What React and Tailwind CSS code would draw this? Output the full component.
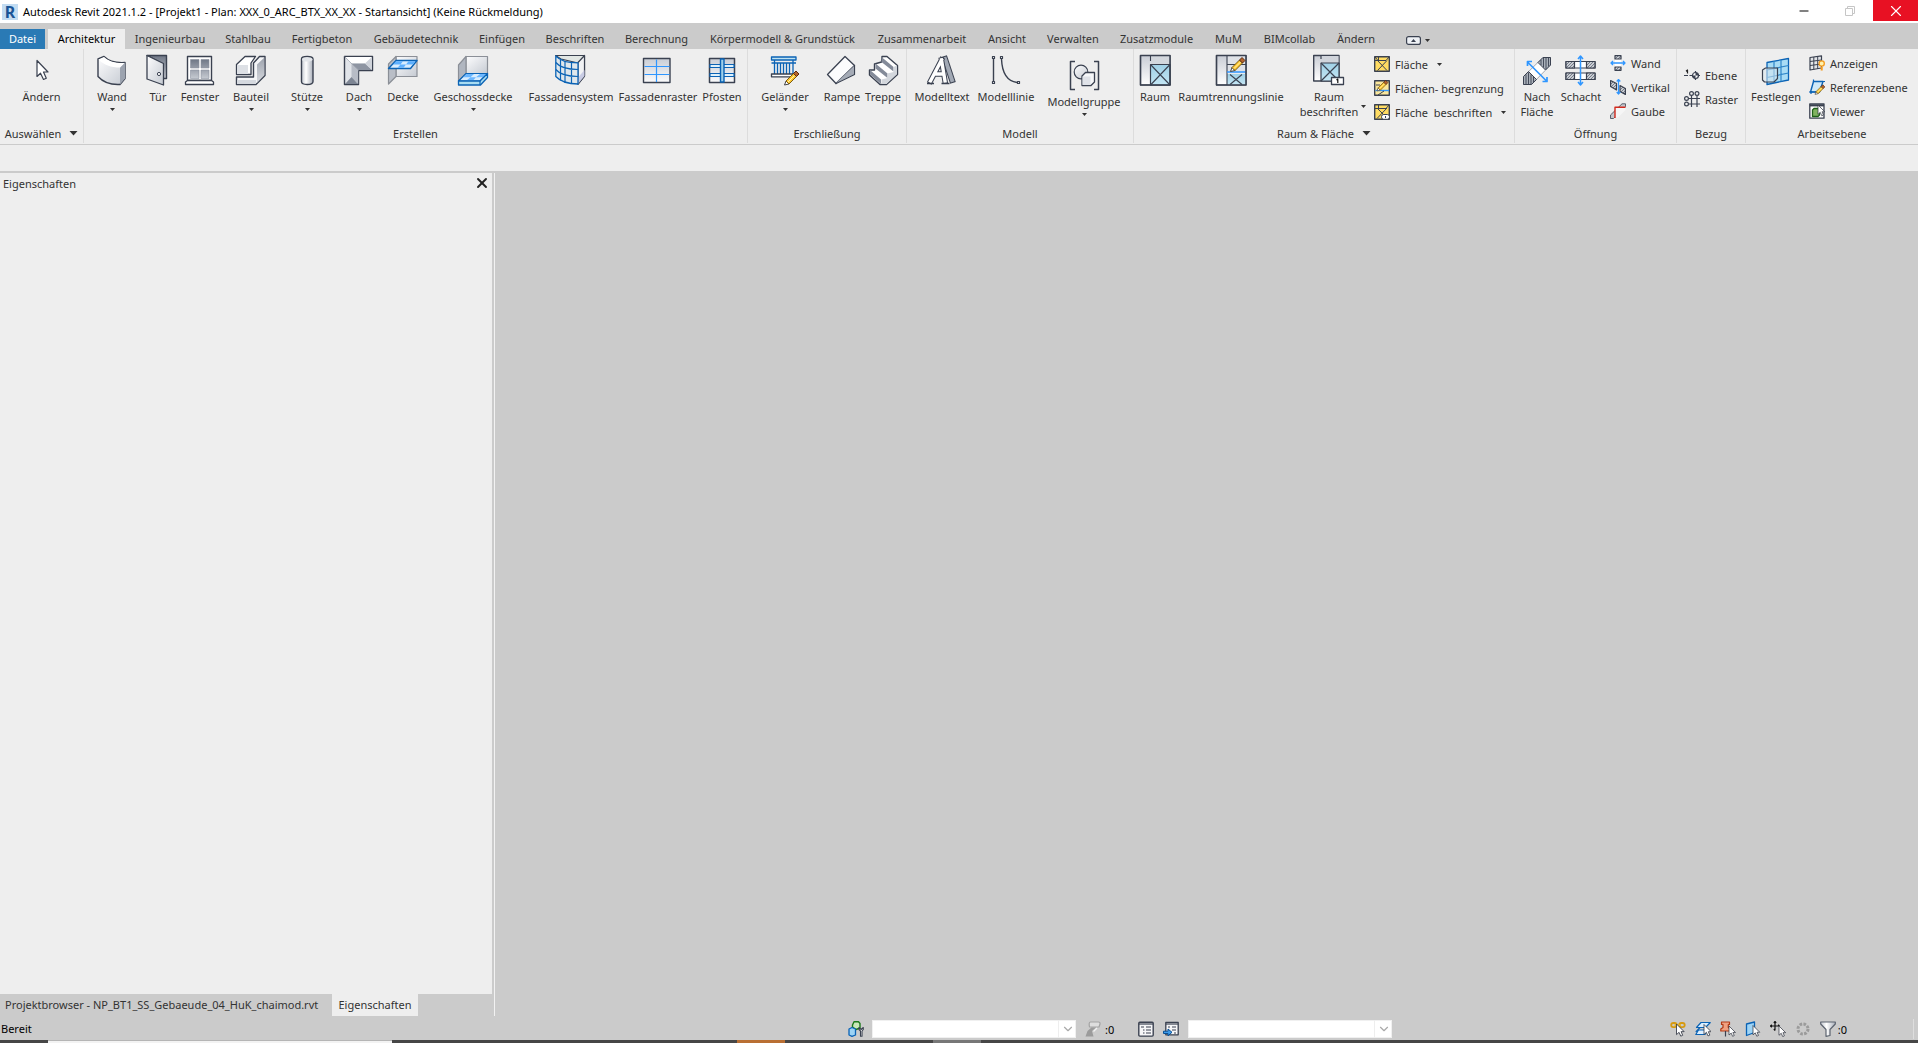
import { useState } from 'react';
import { ChevronDown, Minus, X } from 'lucide-react';
import clsx from 'clsx';

const INK = '#3a4150';
const BLUE = '#0b63b5';
const SKY = '#2f96ff';

/* ---------- icons ---------- */

// shared gradients, referenced by id from every icon
function Gradients() {
  return (
    <svg width="0" height="0" className="absolute" aria-hidden="true">
      <defs>
        <linearGradient id="light" x1="0" y1="0" x2="1" y2="1">
          <stop offset="0" stopColor="#fdfdfe" />
          <stop offset="1" stopColor="#c5cad2" />
        </linearGradient>
        <linearGradient id="down" x1="0" y1="0" x2="0" y2="1">
          <stop offset="0" stopColor="#c9cdd5" />
          <stop offset="1" stopColor="#fbfbfc" />
        </linearGradient>
        <linearGradient id="dark" x1="0" y1="0" x2="0" y2="1">
          <stop offset="0" stopColor="#6f7786" />
          <stop offset="1" stopColor="#c6cad1" />
        </linearGradient>
        <linearGradient id="tube" x1="0" y1="0" x2="1" y2="0">
          <stop offset="0" stopColor="#c3c8d0" />
          <stop offset="0.4" stopColor="#ffffff" />
          <stop offset="1" stopColor="#a9afba" />
        </linearGradient>
        <linearGradient id="wall" x1="0" y1="0" x2="0" y2="1">
          <stop offset="0" stopColor="#c9cdd5" />
          <stop offset="1" stopColor="#ffffff" />
        </linearGradient>
        <linearGradient id="water" x1="0" y1="0" x2="0" y2="1">
          <stop offset="0" stopColor="#9fd0e6" />
          <stop offset="1" stopColor="#c4e6f4" />
        </linearGradient>
        <pattern id="hatch" width="3" height="3" patternUnits="userSpaceOnUse">
          <rect width="3" height="3" fill="#c9cdd3" />
          <path d="M0 3L3 0" stroke="#6c7380" strokeWidth="0.9" />
        </pattern>
      </defs>
    </svg>
  );
}

function Icon({ size = 32, children }) {
  return (
    <svg width={size} height={size} viewBox={`0 0 ${size} ${size}`} fill="none" stroke={INK} strokeWidth="1.2" strokeLinejoin="round" className="shrink-0" aria-hidden="true">
      {children}
    </svg>
  );
}

const Pencil = ({ at = '', scale = 1 }) => (
  <g transform={`${at} scale(${scale})`} strokeWidth="1">
    <path d="M0 14.5L1.5 10.5L4.5 13.5z" fill="#fff" stroke="#444" />
    <path d="M1.5 10.5L9 3L12 6L4.5 13.5z" fill="#ffc931" stroke="#7a5a12" />
    <path d="M9 3L11.5 0.5L14.5 3.5L12 6z" fill="#b4632d" stroke="#5b2c10" />
    <path d="M3.5 11.5L10 5" stroke="#fff3b8" />
  </g>
);

const Cursor = ({ at = '' }) => (
  <path transform={at} d="M0 0V12.5L3 9.8L5 14.3L7.3 13.3L5.4 9H9z" fill="#fff" stroke="#333844" strokeWidth="1" />
);

const CursorIcon = () => (
  <Icon><path d="M11 6.5V22.5L14.5 19.2L17.5 25.5L20.3 24.2L17.5 18H22z" fill="#fff" stroke={INK} strokeWidth="1.2" /></Icon>
);

const WallIcon = () => (
  <Icon>
    <path d="M2 5L8 2.5C13 7.5 21 9 29 8.5V24.5L24 30.5C15 31 7 28 2 22.5z" fill="url(#light)" strokeWidth="1.4" />
    <path d="M24 30.5V13.5L29 8.5V24.5z" fill="#9ca3af" stroke="none" />
    <path d="M2.5 5.5L8 3C13 8 21 9.5 28.5 9L24 13.5C15 13.5 8 11 2.5 5.5z" fill="#fff" stroke="none" />
  </Icon>
);

const DoorIcon = () => (
  <Icon>
    <path d="M5 1.5H24.5V24.5H21V10L8 3z" fill="url(#dark)" strokeWidth="1.4" />
    <path d="M5 1.5L21.5 9.5V31L5 25z" fill="url(#light)" strokeWidth="1.3" />
    <circle cx="17" cy="20" r="1.6" fill="#fff" strokeWidth="1" />
  </Icon>
);

const WindowIcon = () => (
  <Icon>
    <rect x="3.5" y="2.5" width="24" height="24" fill="#fff" strokeWidth="1.4" />
    <path d="M6.5 5.5H15V14H6.5zM17 5.5H25V14H17zM6.5 16H15V24.5H6.5zM17 16H25V24.5H17z" fill="url(#dark)" stroke="#8b92a0" strokeWidth="0.6" />
    <path d="M3.5 26.5H27.5L29.5 28V30.5H1.5V28z" fill="#fff" strokeWidth="1.3" />
  </Icon>
);

const ComponentIcon = () => (
  <Icon>
    <path d="M1.5 10.5L10 2.5H20.5L16 9V20.5H1.5z" fill="#fff" strokeWidth="1.3" />
    <path d="M2 11H13V20H2z" fill="#dde0e5" stroke="none" />
    <path d="M18.5 9L24.5 2.5H30V21.5L21 30.5H1.5V23H18.5z" fill="#f4f5f7" strokeWidth="1.4" />
    <path d="M22 10.5L29.5 3.5V21L22 29z" fill="url(#dark)" stroke="none" opacity="0.65" />
    <path d="M2 26H21V30H2z" fill="#d5d9df" stroke="none" />
  </Icon>
);

const ColumnIcon = () => (
  <Icon>
    <path d="M10.5 5Q10.5 2.5 16.2 2.5T22 5V27.5Q22 30.5 16.2 30.5T10.5 27.5z" fill="url(#tube)" strokeWidth="1.4" />
    <path d="M11 5.5Q11 7.5 16.2 7.5T21.5 5.5Q21 3.2 16.2 3.2T11 5.5z" fill="#e3e6ea" stroke="none" />
  </Icon>
);

const RoofIcon = () => (
  <Icon>
    <path d="M1.5 2.5H29.5V16.5H15.5V30.5H1.5z" fill="#e1e4e9" strokeWidth="1.4" />
    <path d="M2 3H29L22 9.5H8.5z" fill="#fff" stroke="none" />
    <path d="M8.5 9.5H22L29 16H15.5z" fill="#8e95a2" stroke="none" />
    <path d="M8.5 9.5L15.2 16.5V30L8.5 23z" fill="#b7bcc6" stroke="none" />
    <path d="M29 3V16L22 9.5z" fill="#cfd3da" stroke="none" />
    <path d="M2 30L8.5 23L15 30z" fill="#7d8593" stroke="none" />
    <path d="M1.5 2.5L15.5 16.5" strokeWidth="0.6" stroke="#8b92a0" />
  </Icon>
);

const CeilingIcon = () => (
  <Icon>
    <path d="M9 2.5H30V22.5H9z" fill="url(#light)" stroke="#8b8f97" />
    <path d="M1.5 10L9 2.5V22.5L1.5 30z" fill="#b9bec7" stroke="#8b8f97" />
    <path d="M1.5 14.5L9 6.5H30L23.5 14.5z" fill="#d8edff" stroke={BLUE} strokeWidth="1.4" />
    <path d="M9 7.2H16L13.5 10.5H6zM21.5 7.2H28.5L26 10.5H19zM13.5 10.5H19L16.5 13.8H10.5z" fill="#5db0ff" stroke="none" />
  </Icon>
);

const FloorIcon = () => (
  <Icon>
    <path d="M9 2.5H30.5V20H9z" fill="url(#light)" stroke="#8b8f97" />
    <path d="M1.5 11L9 2.5V20L1.5 27z" fill="#b0b6c0" stroke="#8b8f97" />
    <path d="M1.5 27L9 19.5H30.5L23 27z" fill="#d8edff" stroke={BLUE} />
    <path d="M9.5 20H17L13.5 23.3H6zM23 20H29.5L26.5 23.3H19zM13.5 23.3H19L16 26.5H9.5z" fill="#6cb7ff" stroke="none" />
    <path d="M1.5 27H23L30.5 19.5V23.5L23.5 31H1.5z" fill="#a8dcf2" stroke={BLUE} strokeWidth="1.3" />
    <path d="M23 27V31" stroke={BLUE} />
  </Icon>
);

const CurtainSystemIcon = () => (
  <Icon>
    <path d="M0.5 1.5H29.5V22L23 30V9L6 5z" fill="#e2e7e4" />
    <path d="M29.5 1.5V22L23 30V8.5z" fill="#f1f2f4" />
    <path d="M23.5 23L29.5 16V22L23 30z" fill="#c9cce4" stroke="none" />
    <path d="M0.8 1.8C5 7 12 8.8 23 8.8V30C12 30 5 27 0.8 22.5z" fill="#dfe7ec" stroke={BLUE} strokeWidth="1.3" />
    <path d="M0.8 8.5C5 13.5 12 15.5 23 15.5M0.8 15.5C5 20.5 12 22.5 23 22.5M5.5 6V26.5M10 7.5V29M16.5 8.5V29.8" stroke={BLUE} strokeWidth="1.2" />
  </Icon>
);

const CurtainGridIcon = () => (
  <Icon>
    <rect x="1.5" y="4.5" width="26.5" height="24" fill="url(#down)" strokeWidth="1.4" />
    <path d="M14.5 5.5V28M2.5 12.5H27.5M2.5 20.5H27.5" stroke={SKY} strokeWidth="1.2" />
  </Icon>
);

const MullionIcon = () => (
  <Icon>
    <rect x="3.5" y="4.5" width="25" height="24" fill="url(#down)" strokeWidth="1.5" />
    <path d="M4 10.5H28V13.5H4zM4 19.5H28V22.5H4z" fill="#dff1fb" stroke={BLUE} strokeWidth="1.2" />
    <rect x="14.5" y="5" width="3.5" height="23" fill="#9fd0ea" stroke={BLUE} strokeWidth="1.4" />
  </Icon>
);

const RailingIcon = () => (
  <Icon>
    <rect x="2.5" y="3" width="24.5" height="3" fill="#bfe3f3" stroke={BLUE} strokeWidth="1.3" />
    <path d="M2.5 9H27M5.5 6V20M8.5 9V20M11.5 9V20M14.5 9V20M17.5 9V20M20.5 9V20M24 6V20" stroke={BLUE} strokeWidth="1.3" />
    <rect x="2.5" y="20" width="24" height="2.8" fill="#fff" strokeWidth="1.3" />
    <Pencil at="translate(15.5 16.5)" />
  </Icon>
);

const RampIcon = () => (
  <Icon>
    <path d="M28.5 11.5V20.5L10 29.5z" fill="url(#dark)" />
    <path d="M1.5 20.5L19 2.5L28.5 11.5L10 29.5z" fill="#fcfcfd" strokeWidth="1.3" />
    <path d="M10 29L28 12V20z" fill="#a5abb6" stroke="none" />
  </Icon>
);

const StairIcon = () => (
  <Icon>
    <path d="M15 2.5H20L30.5 11.5V20.5L19.5 30.5H13L2.5 21V16L7.5 16V10L14.5 8z" fill="#fff" strokeWidth="1.4" />
    <path d="M14.5 3L26.5 13V17.5L14.5 8zM8.5 9.5L20.5 19.5V24L8.5 14.5zM3 16L14 25.5V30L3 20.5z" fill="#848b99" stroke="none" />
    <path d="M26.5 13L30 11.5V20L19.5 30H14.5V25.5L20.5 24V19.5L26.5 18z" fill="#d3d7dd" stroke="none" />
  </Icon>
);

const ModelTextIcon = () => (
  <Icon>
    <g strokeLinecap="square">
      <path d="M19 5L26 26" stroke="#3a4150" strokeWidth="6" />
      <path d="M19 5L26 26" stroke="#a2a9b5" strokeWidth="4" />
      <path d="M15.5 6L4.5 27M15.5 6L19 27M9 20H17" stroke="#3a4150" strokeWidth="5.4" />
      <path d="M15.5 6L4.5 27M15.5 6L19 27M9 20H17" stroke="#fff" strokeWidth="3.4" />
    </g>
    <path d="M1 29.5H8M15.5 29.5H23.5" strokeWidth="1.4" />
  </Icon>
);

const ModelLineIcon = () => (
  <Icon>
    <path d="M3.5 5V27M11.5 5C12 17 16 27 27 28.5" strokeWidth="1.4" />
    <path d="M2.5 2.5H4.5V4.5H2.5zM2.5 27.5H4.5V29.5H2.5zM10.5 2.5H12.5V4.5H10.5zM27.5 27.5H29.5V29.5H27.5z" fill="#fff" />
  </Icon>
);

const ModelGroupIcon = () => (
  <Icon>
    <path d="M7 2.5H2.5V30.5H7M26 2.5H30.5V30.5H26" strokeWidth="1.5" />
    <circle cx="13" cy="13" r="6.8" fill="url(#light)" />
    <path d="M14 17L17.5 13.5H26.5V23L23 26.5H14z" fill="#f6f7f9" strokeWidth="1.3" />
    <path d="M14.5 17.5H22.5V26H14.5z" fill="#dfe2e8" stroke="none" />
  </Icon>
);

const RoomIcon = () => (
  <Icon>
    <rect x="1.5" y="1.5" width="29.5" height="29.5" fill="url(#wall)" />
    <rect x="12" y="2" width="19" height="8" fill="#d3d7dd" stroke="none" />
    <rect x="11.5" y="10.5" width="19.5" height="20.5" fill="url(#water)" />
    <path d="M11.5 10.5L31 31M31 10.5L11.5 31M11.5 2V7" strokeWidth="1.1" />
    <rect x="1.5" y="1.5" width="29.5" height="29.5" strokeWidth="1.5" />
  </Icon>
);

const RoomSeparatorIcon = () => (
  <Icon>
    <rect x="1.5" y="1.5" width="29.5" height="29.5" fill="url(#wall)" />
    <rect x="12" y="2" width="18.5" height="16" fill="#dfe2e7" stroke="none" />
    <rect x="12" y="20" width="18.5" height="10.5" fill="url(#water)" stroke="none" />
    <path d="M12 2V31M15 20.5L27 30.5M27 20.5L15 30.5M12 10.5H31" strokeWidth="1.1" />
    <path d="M12 18H31" stroke={SKY} strokeWidth="1.5" />
    <rect x="1.5" y="1.5" width="29.5" height="29.5" strokeWidth="1.5" />
    <Pencil at="translate(15.5 3)" />
  </Icon>
);

const RoomTagIcon = () => (
  <Icon>
    <rect x="0.7" y="1.5" width="25.3" height="25.5" fill="url(#wall)" strokeWidth="1.4" />
    <rect x="8" y="2" width="17.5" height="7" fill="#d0d4db" stroke="none" />
    <rect x="8" y="9" width="18" height="18" fill="url(#water)" />
    <path d="M8 9L26 27M26 9L8 27M8 2V5" />
    <rect x="18.5" y="23.5" width="12" height="7" fill="#fff" strokeWidth="1.3" />
    <path d="M23.5 26L24.8 25V29" stroke="#111" />
  </Icon>
);

const ByFaceIcon = () => (
  <Icon>
    <path d="M2.5 30.5V22.5L22 3.5H29.5V11L10.5 30.5z" fill="#fff" stroke="#8b92a0" strokeWidth="0.8" />
    <path d="M17 8.5L22 3.5H29.5V11L24.5 16zM2.5 22.5L7.5 17.5L15.5 25.5L10.5 30.5H2.5z" fill="#aab1ba" stroke={INK} strokeWidth="1" />
    <path d="M20 6V11M22.5 4V13.5M25 4V15M27.5 4V12.5M5 20.5V30M7.5 18.5V30M10 20.5V30M12.5 23V28" strokeWidth="0.9" />
    <path d="M7 8.5L25 26.5M6.5 12V7.5H11M21.5 27.5H26V23" stroke={SKY} strokeWidth="1.7" />
  </Icon>
);

const ShaftIcon = () => (
  <Icon>
    <path d="M1 7.5H30V14H1zM1 19H30V25.5H1z" fill="#fff" stroke={INK} />
    <path d="M1 7.5H9.5V14H1zM21.5 7.5H30V14H21.5zM1 19H9.5V25.5H1zM21.5 19H30V25.5H21.5z" fill="url(#hatch)" />
    <path d="M15.5 2V31M13 5L15.5 2L18 5M13 28L15.5 31L18 28" stroke={SKY} strokeWidth="1.5" />
  </Icon>
);

const SetPlaneIcon = () => (
  <Icon>
    <path d="M7 8.5L28.5 4.5V26L7 30.5z" fill="#a8dcf5" stroke={BLUE} strokeWidth="1.3" />
    <path d="M14 7V29M21 6V27.5M7 16L28.5 11.5M7 23.5L28.5 19" stroke="#2f86c9" />
    <path d="M2.5 16L5.5 14H17.5V24.5L14 28H4.5L2.5 26z" fill="#dbe7ef" fillOpacity="0.55" strokeWidth="1.2" />
  </Icon>
);

/* 16px icons */

const AreaIcon = () => (
  <Icon size={16}>
    <rect x="0.7" y="0.7" width="14.6" height="14.6" fill="#ffdc62" strokeWidth="1.4" />
    <path d="M1 4.5H12M4.5 1V4.5M3.5 4.5L13 14.5M13 4.5L3.5 14.5M1 1L4 4.5M15 1L12 4.5" strokeWidth="1" />
  </Icon>
);

const AreaBoundaryIcon = () => (
  <Icon size={16}>
    <rect x="0.7" y="0.7" width="14.6" height="14.6" fill="#fbe79b" strokeWidth="1.4" />
    <path d="M1.5 10.5H15" stroke={SKY} strokeWidth="1.4" />
    <path d="M4 15L10 11M2 5H6" strokeWidth="1" />
    <Pencil at="translate(3 0)" scale={0.75} />
  </Icon>
);

const AreaTagIcon = () => (
  <Icon size={16}>
    <rect x="0.7" y="0.7" width="14.6" height="14.6" fill="#ffdc62" strokeWidth="1.4" />
    <path d="M1 4.5H12M3.5 4.5L12 13M13 4L3 14.5M4.5 1V4.5M15 1L12 4.5" strokeWidth="1" />
    <rect x="7.5" y="10.5" width="8" height="4.8" rx="2.2" fill="#fff" strokeWidth="1" />
    <path d="M11.5 12V14" strokeWidth="1" />
  </Icon>
);

const WallOpeningIcon = () => (
  <Icon size={16}>
    <path d="M5 0.7H11V15.3H5z" fill="#fff" stroke="none" />
    <path d="M5 0.7H11V4H5zM5 12H11V15.3H5z" fill="url(#hatch)" />
    <path d="M1 8H15M3 6L1 8L3 10M13 6L15 8L13 10" stroke={SKY} strokeWidth="1.3" />
  </Icon>
);

const VerticalIcon = () => (
  <Icon size={16}>
    <path d="M0.6 1.5L6.5 4.5V11L0.6 7.5zM10 6.5L15.4 9.5V15.4L10 12.5z" fill="url(#hatch)" />
    <path d="M8.5 0.5V15M6.7 2.5L8.5 0.5L10.3 2.5M6.7 13L8.5 15L10.3 13" stroke={SKY} strokeWidth="1.2" />
  </Icon>
);

const DormerIcon = () => (
  <Icon size={16}>
    <path d="M0.5 15.5V12L12 0.8H15.5V3.5L3.5 15.5z" fill="#c3c7cd" stroke="#4d5460" strokeWidth="0.9" />
    <path d="M5 14.5V4.5H15.5V7L8 14.5z" fill="#f6f6f6" stroke="none" />
    <path d="M5 15V4.2H15.5" stroke="#d22a1e" strokeWidth="1.4" />
  </Icon>
);

const LevelIcon = () => (
  <Icon size={16}>
    <path d="M0 8.5H4M5.5 8.5H7.5M11.5 4V13M7 8.5H16" />
    <path d="M2 4.2L3.5 3V6.5" stroke="#222" />
    <circle cx="11.5" cy="8.5" r="3" fill="#fff" />
    <path d="M11.5 8.5V5.5A3 3 0 0 1 14.5 8.5zM11.5 8.5V11.5A3 3 0 0 1 8.5 8.5z" fill={INK} stroke="none" />
  </Icon>
);

const GridIcon = () => (
  <Icon size={16}>
    <path d="M7.5 4.5V16M13 4.5V16M4.5 7.5H16M4.5 13H16" />
    <circle cx="7.5" cy="2.5" r="1.9" />
    <circle cx="13" cy="2.5" r="1.9" />
    <circle cx="2.5" cy="7.5" r="1.9" />
    <circle cx="2.5" cy="13" r="1.9" />
  </Icon>
);

const ShowPlaneIcon = () => (
  <Icon size={16}>
    <path d="M1 2.5L12.5 0.8V13L1 15z" fill="#e3e5e8" />
    <path d="M4.8 2V14.5M8.7 1.5V14M1 6.5L12.5 5M1 10.5L12.5 9" strokeWidth="1" />
    <circle cx="12.7" cy="8.5" r="2.6" fill="#fff3b0" stroke="#f59b1c" strokeWidth="1.3" />
    <path d="M12.7 12V15.5" stroke="#f59b1c" strokeWidth="2" />
  </Icon>
);

const RefPlaneIcon = () => (
  <Icon size={16}>
    <path d="M4.5 2.5H14L10.5 13H1.5z" fill="#cfe9f8" stroke={BLUE} strokeWidth="1.4" />
    <path d="M0 13H11M4.5 0.5V3M2 15V12M12 2.5H16" stroke={BLUE} strokeWidth="1.2" />
    <Pencil at="translate(6 5.5)" scale={0.68} />
  </Icon>
);

const ViewerIcon = () => (
  <Icon size={16}>
    <rect x="0.8" y="0.8" width="14.2" height="14.4" fill="#fff" strokeWidth="1.3" />
    <path d="M0.8 2.3H15" strokeWidth="2.2" />
    <path d="M3.5 7L5 5.5H10.5V12L9 13.5H3.5z" fill="#7fb35f" stroke="#20621a" strokeWidth="1.3" />
    <Cursor at="translate(9 2) scale(0.75)" />
  </Icon>
);

const WorksetIcon = () => (
  <Icon size={16}>
    <path d="M4.5 4L6 0.8H10.5L12 2.5V7L8 8.5L4.5 6z" fill="#c9e8b8" stroke="#1c7a1b" strokeWidth="1.4" />
    <path d="M1 8L4 6.5L7.5 8V14L4 15.3L1 14z" fill="#9cd3f5" stroke={BLUE} strokeWidth="1.3" />
    <path d="M11 6.5V8.5L12.5 10V15.3H14V10L15.3 8.5V6.5L13.2 8.5z" fill="#fff" strokeWidth="1.1" />
  </Icon>
);

const FilterSelectionIcon = () => (
  <Icon size={16}>
    <path d="M5.5 1H13.5Q15.3 1 15 3L14 6H4.5Q3.5 1 5.5 1z" fill="#dedede" stroke="#a3a3a3" />
    <path d="M11 6.5L7 10L8.5 15.5H0.5L2.5 10L6.5 6.5z" fill="#9b9b9b" stroke="none" />
    <path d="M12 7L8.5 10.5" stroke="#f2f2f2" />
  </Icon>
);

const DesignOptionsIcon = () => (
  <Icon size={16}>
    <rect x="0.8" y="1.3" width="14.4" height="13.8" rx="1" fill="#f6f6f8" strokeWidth="1.4" />
    <path d="M0.8 3H15.2" strokeWidth="1.2" />
    <path d="M3 6H6M8 6H13M5 9H6.5M8 9H13M5 12H6.5M8 12H13" strokeWidth="1.2" />
  </Icon>
);

const AddOptionIcon = () => (
  <Icon size={16}>
    <rect x="2.8" y="1.3" width="12.4" height="12.5" fill="#f6f6f8" strokeWidth="1.3" />
    <path d="M2.8 3H15.2" strokeWidth="1.2" />
    <path d="M5 6H7M9 6H13M9 9H13M11 12H13" strokeWidth="1.2" />
    <path d="M0.5 10.2H5V8L9 11.3L5 14.8V12.5H0.5z" fill="#3d9bea" stroke="#084f94" strokeWidth="1" />
  </Icon>
);

const SelectLinksIcon = () => (
  <Icon size={16}>
    <rect x="1.2" y="2" width="5.5" height="4.2" rx="2.1" stroke="#d69a11" strokeWidth="1.8" />
    <rect x="9.2" y="2" width="5.5" height="4.2" rx="2.1" stroke="#d69a11" strokeWidth="1.8" />
    <path d="M4.5 4.1H11" stroke="#e8b526" strokeWidth="1.8" />
    <Cursor at="translate(6.5 3) scale(0.85)" />
  </Icon>
);

const SelectUnderlayIcon = () => (
  <Icon size={16}>
    <path d="M6 1.5H15.3L10.5 6.5H1.5z" fill="#dcefff" stroke={BLUE} />
    <path d="M3.5 9H12L10 13.5H0.8z" fill="#dcefff" stroke={BLUE} />
    <path d="M0.8 11L5 6.5" stroke={BLUE} />
    <Cursor at="translate(9 3.5) scale(0.8)" />
  </Icon>
);

const SelectPinnedIcon = () => (
  <Icon size={16}>
    <path d="M1.5 1H9.5V3.5H8.3V6.5L10.5 8V10H0.8V8L3 6.5V3.5H1.5z" fill="#f0a080" stroke="#b23a16" />
    <path d="M5.5 10V15.5" strokeWidth="1.2" />
    <Cursor at="translate(9 5) scale(0.72)" />
  </Icon>
);

const SelectByFaceIcon = () => (
  <Icon size={16}>
    <path d="M1.5 3L9.5 1V11.5L1.5 14.5z" fill="#9ed4f6" stroke={BLUE} strokeWidth="1.3" />
    <Cursor at="translate(8 4.5) scale(0.75)" />
  </Icon>
);

const DragSelectIcon = () => (
  <Icon size={16}>
    <path d="M5 0.5V9.5M0.5 5H9.5M3.8 1.8L5 0.5L6.2 1.8M1.8 3.8L0.5 5L1.8 6.2M3.8 8.2L5 9.5M8.2 3.8L9.5 5" stroke="#111" strokeWidth="1.2" />
    <Cursor at="translate(9 5) scale(0.74)" />
  </Icon>
);

const BackgroundIcon = () => (
  <Icon size={16}>
    <circle cx="8" cy="8" r="5" stroke="#9b9b9b" strokeWidth="3" strokeDasharray="2.6 1.3" />
  </Icon>
);

const FunnelIcon = () => (
  <Icon size={16}>
    <path d="M0.7 1H15.3V3L10 8.5V14.5L6 15.3V8.5L0.7 3z" fill="url(#tube)" stroke="#5d6470" strokeWidth="1.2" />
  </Icon>
);

/* ---------- small building blocks ---------- */

function Caret({ big, className }) {
  return big ? (
    <svg width="9" height="5" viewBox="0 0 9 5" className={clsx('shrink-0', className)} aria-hidden="true"><path d="M0.5 0H8.5L4.5 4.5z" fill="#333" /></svg>
  ) : (
    <svg width="5" height="3" viewBox="0 0 5 3" className={clsx('shrink-0', className)} aria-hidden="true"><path d="M0 0H5L2.5 3z" fill="#333" /></svg>
  );
}

// big ribbon button: icon on top, caption (one or two lines) below
function Tool({ icon: Pic, label, width, caret, sideCaret, low }) {
  return (
    <button type="button" className={clsx('relative flex h-20 shrink-0 flex-col items-center', width, low ? 'pt-[10px]' : 'pt-[5px]')}>
      <Pic />
      <span className="mt-[3px] whitespace-pre text-center leading-[15px]">{label}</span>
      {caret && <Caret className="mt-1" />}
      {sideCaret && <Caret className="absolute right-1.5 top-14" />}
    </button>
  );
}

function SmallTool({ icon: Pic, label, caret }) {
  return (
    <button type="button" className="flex h-6 items-center gap-[5px] whitespace-pre">
      <Pic />
      {label}
      {caret && <Caret className="ml-1" />}
    </button>
  );
}

function Panel({ title, width, caret, children }) {
  return (
    <section className={clsx('flex flex-col border-r border-[#dcdcdc]', width)}>
      <div className="flex h-[75px]">{children}</div>
      <h2 className="flex h-[18px] items-center justify-center gap-2">
        {title}
        {caret && <Caret big />}
      </h2>
    </section>
  );
}

const tabs = [
  { name: 'Architektur', width: 'w-[77px]' },
  { name: 'Ingenieurbau', width: 'w-[90px]' },
  { name: 'Stahlbau', width: 'w-[66px]' },
  { name: 'Fertigbeton', width: 'w-[82px]' },
  { name: 'Gebäudetechnik', width: 'w-[106px]' },
  { name: 'Einfügen', width: 'w-[66px]' },
  { name: 'Beschriften', width: 'w-20' },
  { name: 'Berechnung', width: 'w-[83px]' },
  { name: 'Körpermodell & Grundstück', width: 'w-[169px]' },
  { name: 'Zusammenarbeit', width: 'w-[110px]' },
  { name: 'Ansicht', width: 'w-[60px]' },
  { name: 'Verwalten', width: 'w-[72px]' },
  { name: 'Zusatzmodule', width: 'w-[95px]' },
  { name: 'MuM', width: 'w-[49px]' },
  { name: 'BIMcollab', width: 'w-[73px]' },
  { name: 'Ändern', width: 'w-[60px]' },
];

function TitleBar() {
  return (
    <header className="flex h-[23px] shrink-0 items-start bg-white text-black">
      <div className="flex h-[23px] flex-1 items-center">
        <span className="ml-0.5 flex h-4 w-4 items-center justify-center bg-[#c3dcf2] text-base font-bold leading-4 text-[#1a5496]">R</span>
        <h1 className="ml-[5px]">Autodesk Revit 2021.1.2 - [Projekt1 - Plan: XXX_0_ARC_BTX_XX_XX - Startansicht] (Keine Rückmeldung)</h1>
      </div>
      <button type="button" aria-label="Minimieren" className="flex h-[21px] w-[46px] items-center justify-center">
        <Minus size={14} strokeWidth={1.7} />
      </button>
      <button type="button" aria-label="Wiederherstellen" className="flex h-[21px] w-[46px] items-center justify-center">
        <svg width="10" height="10" viewBox="0 0 10 10" fill="none" stroke="#c6c6c6"><path d="M0.5 2.5H7.5V9.5H0.5zM2.5 2.5V0.5H9.5V7.5H7.5" /></svg>
      </button>
      <button type="button" aria-label="Schließen" className="flex h-[21px] w-[45px] items-center justify-center bg-[#e81123] text-white">
        <X size={18} strokeWidth={1.5} />
      </button>
    </header>
  );
}

function TabRow({ active, onSelect }) {
  return (
    <nav className="flex h-[26px] shrink-0 items-end bg-[#cbcbcb]">
      <button type="button" className="mr-[3px] h-5 w-[45px] bg-[#2a7ab5] pb-0.5 text-white">Datei</button>
      {tabs.map((tab) => (
        <button
          key={tab.name}
          type="button"
          onClick={() => onSelect(tab.name)}
          className={clsx('h-5 shrink-0 whitespace-nowrap pb-0.5', tab.width, tab.name === active && 'bg-[#eeeeee] text-black')}
        >
          {tab.name}
        </button>
      ))}
      <button type="button" aria-label="Multifunktionsleiste minimieren" className="ml-5 flex h-[18px] items-center gap-1">
        <svg width="15" height="9" viewBox="0 0 15 9"><rect x="0.6" y="0.6" width="13.8" height="7.8" rx="2" fill="#eef1f5" stroke={INK} strokeWidth="1.2" /><path d="M5 6H10L7.5 3z" fill={INK} /></svg>
        <Caret />
      </button>
    </nav>
  );
}

function Ribbon() {
  return (
    <div className="flex h-24 shrink-0 overflow-hidden border-b border-[#cbcbcb] bg-[#eeeeee] pb-px">
      <Panel title="Auswählen" width="w-[84px]" caret>
        <Tool icon={CursorIcon} label="Ändern" width="w-[83px]" />
      </Panel>
      <Panel title="Erstellen" width="w-[664px]">
        <Tool icon={WallIcon} label="Wand" width="w-14" caret />
        <Tool icon={DoorIcon} label="Tür" width="w-9" />
        <Tool icon={WindowIcon} label="Fenster" width="w-12" />
        <Tool icon={ComponentIcon} label="Bauteil" width="w-[54px]" caret />
        <Tool icon={ColumnIcon} label="Stütze" width="w-[58px]" caret />
        <Tool icon={RoofIcon} label="Dach" width="w-[46px]" caret />
        <Tool icon={CeilingIcon} label="Decke" width="w-[42px]" />
        <Tool icon={FloorIcon} label="Geschossdecke" width="w-[98px]" caret />
        <Tool icon={CurtainSystemIcon} label="Fassadensystem" width="w-[98px]" />
        <Tool icon={CurtainGridIcon} label="Fassadenraster" width="w-[76px]" />
        <Tool icon={MullionIcon} label="Pfosten" width="w-[52px]" />
      </Panel>
      <Panel title="Erschließung" width="w-[159px]">
        <Tool icon={RailingIcon} label="Geländer" width="w-[74px]" caret />
        <Tool icon={RampIcon} label="Rampe" width="w-10" />
        <Tool icon={StairIcon} label="Treppe" width="w-[42px]" />
      </Panel>
      <Panel title="Modell" width="w-[227px]">
        <Tool icon={ModelTextIcon} label="Modelltext" width="w-[70px]" />
        <Tool icon={ModelLineIcon} label="Modelllinie" width="w-[58px]" />
        <Tool icon={ModelGroupIcon} label="Modellgruppe" width="w-[98px]" caret low />
      </Panel>
      <Panel title="Raum & Fläche" width="w-[381px]" caret>
        <Tool icon={RoomIcon} label="Raum" width="w-[42px]" />
        <Tool icon={RoomSeparatorIcon} label="Raumtrennungslinie" width="w-[110px]" />
        <Tool icon={RoomTagIcon} label={'Raum\nbeschriften'} width="w-[86px]" sideCaret />
        <div className="ml-0.5 flex flex-col pt-[3px]">
          <SmallTool icon={AreaIcon} label="Fläche" caret />
          <SmallTool icon={AreaBoundaryIcon} label="Flächen- begrenzung" />
          <SmallTool icon={AreaTagIcon} label="Fläche  beschriften" caret />
        </div>
      </Panel>
      <Panel title="Öffnung" width="w-[162px]">
        <Tool icon={ByFaceIcon} label={'Nach\nFläche'} width="w-11" />
        <Tool icon={ShaftIcon} label="Schacht" width="w-11" />
        <div className="ml-[7px] flex flex-col pt-0.5">
          <SmallTool icon={WallOpeningIcon} label="Wand" />
          <SmallTool icon={VerticalIcon} label="Vertikal" />
          <SmallTool icon={DormerIcon} label="Gaube" />
        </div>
      </Panel>
      <Panel title="Bezug" width="w-[69px]">
        <div className="ml-[7px] flex flex-col pt-3.5">
          <SmallTool icon={LevelIcon} label="Ebene" />
          <SmallTool icon={GridIcon} label="Raster" />
        </div>
      </Panel>
      <Panel title="Arbeitsebene" width="flex-1 border-r-0">
        <Tool icon={SetPlaneIcon} label="Festlegen" width="w-[60px]" />
        <div className="ml-[3px] flex flex-col pt-0.5">
          <SmallTool icon={ShowPlaneIcon} label="Anzeigen" />
          <SmallTool icon={RefPlaneIcon} label="Referenzebene" />
          <SmallTool icon={ViewerIcon} label="Viewer" />
        </div>
      </Panel>
    </div>
  );
}

function PropertiesDock() {
  return (
    <aside className="flex w-[495px] shrink-0 flex-col border-r border-[#f2f2f2] pr-0.5">
      <div className="flex-1 bg-[#eeeeee]">
        <div className="flex h-5 items-center justify-between pl-[3px] pr-0.5">
          <h2>Eigenschaften</h2>
          <button type="button" aria-label="Palette schließen" className="text-[#222]"><X size={16} strokeWidth={2.8} /></button>
        </div>
      </div>
      <div className="flex h-[22px] shrink-0">
        <button type="button" className="w-[332px] whitespace-nowrap pb-0.5 pl-[5px] text-left">Projektbrowser - NP_BT1_SS_Gebaeude_04_HuK_chaimod.rvt</button>
        <button type="button" className="w-[86px] bg-[#eeeeee] pb-0.5">Eigenschaften</button>
      </div>
    </aside>
  );
}

function Combo({ label }) {
  return (
    <div className="relative h-[18px] w-[204px] bg-white">
      <select aria-label={label} className="h-full w-full appearance-none border border-[#f0f0f0] bg-white" />
      <span className="pointer-events-none absolute inset-y-0 right-0 flex w-[18px] items-center justify-center border-l border-[#eeeeee] text-[#a9a9a9]">
        <ChevronDown size={14} strokeWidth={2} />
      </span>
    </div>
  );
}

function StatusBar() {
  return (
    <footer className="flex h-6 shrink-0 items-center pt-0.5 text-black">
      <p className="w-[848px] pb-0.5 pl-px">Bereit</p>
      <button type="button" aria-label="Bearbeitungsbereiche"><WorksetIcon /></button>
      <div className="ml-2"><Combo label="Aktiver Bearbeitungsbereich" /></div>
      <button type="button" className="ml-[9px] flex w-[53px] items-center gap-1"><FilterSelectionIcon />:0</button>
      <button type="button" aria-label="Entwurfsoptionen"><DesignOptionsIcon /></button>
      <button type="button" aria-label="Zu Satz hinzufügen" className="ml-[9px]"><AddOptionIcon /></button>
      <div className="ml-[9px]"><Combo label="Aktive Entwurfsoption" /></div>
      <div className="ml-auto flex items-center gap-[9px]">
        <button type="button" aria-label="Verknüpfungen auswählen"><SelectLinksIcon /></button>
        <button type="button" aria-label="Unterlagenelemente auswählen"><SelectUnderlayIcon /></button>
        <button type="button" aria-label="Fixierte Elemente auswählen"><SelectPinnedIcon /></button>
        <button type="button" aria-label="Elemente nach Fläche auswählen"><SelectByFaceIcon /></button>
        <button type="button" aria-label="Elemente bei Auswahl ziehen"><DragSelectIcon /></button>
        <button type="button" aria-label="Hintergrundprozesse"><BackgroundIcon /></button>
        <button type="button" className="flex items-center gap-0.5"><FunnelIcon />:0</button>
      </div>
      <div className="ml-[66px] mr-1 h-5 w-px bg-[#dedede]" />
    </footer>
  );
}

// the sliver of the desktop taskbar under the window
function TaskbarEdge() {
  return (
    <div className="flex h-[3px] shrink-0 bg-[#464646]">
      <div className="ml-12 w-[344px] border-t border-[#b5b5b5] bg-[#f3f3f3]" />
      <div className="ml-[345px] w-12 bg-[#b96f33]" />
      <div className="ml-[148px] w-12 bg-[#777777]" />
    </div>
  );
}

export default function App() {
  const [active, setActive] = useState('Architektur');

  return (
    <div className="flex h-screen flex-col overflow-hidden bg-[#cbcbcb] font-['Noto_Sans','Open_Sans',sans-serif] text-[11px] leading-[15px] text-[#333333]">
      <Gradients />
      <TitleBar />
      <TabRow active={active} onSelect={setActive} />
      <Ribbon />
      <div className="mb-0.5 h-[26px] shrink-0 bg-[#eeeeee]" />
      <div className="flex min-h-0 flex-1">
        <PropertiesDock />
        <main className="flex-1" />
      </div>
      <StatusBar />
      <TaskbarEdge />
    </div>
  );
}
